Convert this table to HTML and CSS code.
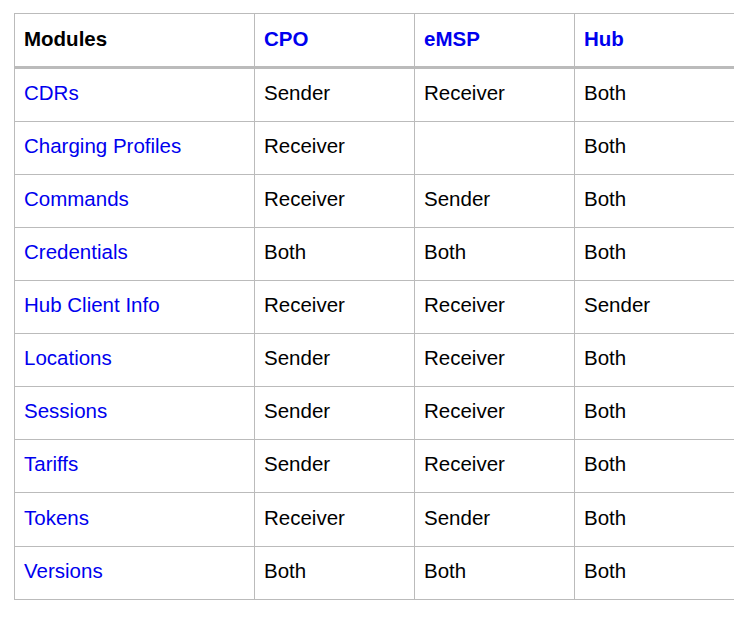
FILE: index.html
```html
<!DOCTYPE html>
<html>
<head>
<meta charset="utf-8">
<link rel="stylesheet" href="styles.css">
</head>
<body>
<table class="modules">
  <colgroup>
    <col class="c1"><col class="c2"><col class="c3"><col class="c4">
  </colgroup>
  <thead>
    <tr>
      <th class="plain">Modules</th>
      <th><a href="#">CPO</a></th>
      <th><a href="#">eMSP</a></th>
      <th><a href="#">Hub</a></th>
    </tr>
  </thead>
  <tbody>
    <tr><td><a href="#">CDRs</a></td><td>Sender</td><td>Receiver</td><td>Both</td></tr>
    <tr><td><a href="#">Charging Profiles</a></td><td>Receiver</td><td></td><td>Both</td></tr>
    <tr><td><a href="#">Commands</a></td><td>Receiver</td><td>Sender</td><td>Both</td></tr>
    <tr><td><a href="#">Credentials</a></td><td>Both</td><td>Both</td><td>Both</td></tr>
    <tr><td><a href="#">Hub Client Info</a></td><td>Receiver</td><td>Receiver</td><td>Sender</td></tr>
    <tr><td><a href="#">Locations</a></td><td>Sender</td><td>Receiver</td><td>Both</td></tr>
    <tr><td><a href="#">Sessions</a></td><td>Sender</td><td>Receiver</td><td>Both</td></tr>
    <tr><td><a href="#">Tariffs</a></td><td>Sender</td><td>Receiver</td><td>Both</td></tr>
    <tr class="tall"><td><a href="#">Tokens</a></td><td>Receiver</td><td>Sender</td><td>Both</td></tr>
    <tr><td><a href="#">Versions</a></td><td>Both</td><td>Both</td><td>Both</td></tr>
  </tbody>
</table>
</body>
</html>
```
FILE: styles.css
```css
html, body {
  margin: 0;
  padding: 0;
  background: #fff;
}
body {
  padding: 13px 0 0 14px;
  font-family: "Liberation Sans", Arial, sans-serif;
  font-size: 20.5px;
  color: #000;
  overflow: hidden;
}
.modules {
  border-collapse: separate;
  border-spacing: 0;
  table-layout: fixed;
  width: 720px;
}
.c1 { width: 240px; }
.c2 { width: 160px; }
.c3 { width: 160px; }
.c4 { width: 160px; }
.modules th,
.modules td {
  box-sizing: border-box;
  padding: 0 0 0 9px;
  text-align: left;
  vertical-align: middle;
  border-left: 1px solid #bbb;
  white-space: nowrap;
}
.modules th {
  height: 56px;
  border-top: 1px solid #bbb;
  border-bottom: 3px solid #bbb;
  font-weight: bold;
  padding-bottom: 2px;
}
.modules td {
  height: 53px;
  border-bottom: 1px solid #bbb;
  padding-bottom: 4px;
}
.modules .tall td {
  height: 54px;
}
.modules a {
  color: #0000ee;
  text-decoration: none;
}
```
